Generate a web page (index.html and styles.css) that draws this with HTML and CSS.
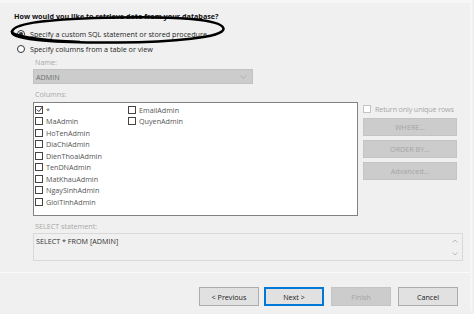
FILE: index.html
```html
<!DOCTYPE html>
<html lang="en">
<head>
  <meta charset="UTF-8" />
  <title>Choose a Command Type</title>
  <link rel="stylesheet" href="styles.css">
</head>
<body>
  <div class="dialog">
    <svg class="ink" width="474" height="60" viewBox="0 0 474 60">
      <path d="M12 32 C 13 22, 60 18.5, 118 17.5 C 175 16.5, 221 19, 223.5 28.5 C 225.5 37.5, 170 42, 118 42.5 C 60 43, 11 40, 12 32 Z" fill="none" stroke="#000" stroke-width="2.6"/>
      <path d="M11 31 C 14 36, 40 40, 80 41.5" fill="none" stroke="#000" stroke-width="1.6"/>
    </svg>

    <p class="question">How would you like to retrieve data from your database?</p>
    <div class="radio-row"><span class="radio checked"></span>Specify a custom SQL statement or stored procedure</div>
    <div class="radio-row"><span class="radio"></span>Specify columns from a table or view</div>

    <div class="indent">
      <div class="field-label">Name:</div>
      <div class="combo">
        <span>ADMIN</span>
        <svg width="7" height="4" viewBox="0 0 7 4"><path d="M0.5 0.5 L3.5 3.3 L6.5 0.5" fill="none" stroke="#a9a9a9" stroke-width="0.9"/></svg>
      </div>

      <div class="field-label cols-label">Columns:</div>
      <div class="columns-row">
        <div class="col-list">
          <div class="item"><span class="check"><svg width="7" height="7" viewBox="0 0 7 7"><path d="M0.8 3.6 L2.8 5.6 L6.4 1" fill="none" stroke="#333" stroke-width="1"/></svg></span>*</div>
          <div class="item"><span class="check"></span>MaAdmin</div>
          <div class="item"><span class="check"></span>HoTenAdmin</div>
          <div class="item"><span class="check"></span>DiaChiAdmin</div>
          <div class="item"><span class="check"></span>DienThoaiAdmin</div>
          <div class="item"><span class="check"></span>TenDNAdmin</div>
          <div class="item"><span class="check"></span>MatKhauAdmin</div>
          <div class="item"><span class="check"></span>NgaySinhAdmin</div>
          <div class="item"><span class="check"></span>GioiTinhAdmin</div>
          <div class="item"><span class="check"></span>EmailAdmin</div>
          <div class="item"><span class="check"></span>QuyenAdmin</div>
        </div>
        <div class="side">
          <div class="unique"><span class="check off"></span>Return only unique rows</div>
          <div class="btn off">WHERE...</div>
          <div class="btn off">ORDER BY...</div>
          <div class="btn off">Advanced...</div>
        </div>
      </div>

      <div class="field-label stmt-label">SELECT statement:</div>
      <div class="stmt">
        <span>SELECT * FROM [ADMIN]</span>
        <div class="scroll">
          <svg width="6" height="4" viewBox="0 0 6 4"><path d="M0.5 3.5 L3 1 L5.5 3.5" fill="none" stroke="#b5b5b5" stroke-width="0.9"/></svg>
          <svg width="6" height="4" viewBox="0 0 6 4"><path d="M0.5 0.5 L3 3 L5.5 0.5" fill="none" stroke="#b5b5b5" stroke-width="0.9"/></svg>
        </div>
      </div>
    </div>

    <div class="footer">
      <div class="btn prev">&lt; Previous</div>
      <div class="btn next">Next &gt;</div>
      <div class="btn off">Finish</div>
      <div class="btn">Cancel</div>
    </div>
  </div>
</body>
</html>
```

FILE: styles.css
```css
body {
  margin: 0;
  font-family: "Open Sans", "Noto Sans", sans-serif;
  font-size: 7.2px;
  color: #1e1e1e;
  background: #f0f0f0;
}

.dialog {
  position: relative;
  width: 472px;
  height: 311px;
  padding-top: 8px;
  box-sizing: border-box;
  border-top: 3px solid #f6f6f6;
  border-right: 2px solid #f6f6f6;
  overflow: hidden;
}

.ink {
  position: absolute;
  left: 0;
  top: -3px;
}

.question {
  margin: 0 0 5px 14px;
  line-height: 10px;
  font-weight: bold;
  color: #111;
}

.radio-row {
  display: flex;
  align-items: center;
  height: 15px;
  padding-left: 17px;
}

.radio {
  width: 8px;
  height: 8px;
  border: 1px solid #333;
  border-radius: 50%;
  box-sizing: border-box;
  margin-right: 5px;
  display: flex;
  align-items: center;
  justify-content: center;
  background: #fff;
}

.radio.checked::after {
  content: "";
  width: 4px;
  height: 4px;
  border-radius: 50%;
  background: #333;
}

.indent {
  padding-left: 33px;
}

.field-label {
  line-height: 10px;
  color: #a8a8a8;
  padding-left: 2px;
  margin-top: 1px;
}

.combo {
  margin-top: 2px;
  width: 220px;
  height: 15px;
  box-sizing: border-box;
  background: #cccccc;
  border: 1px solid #c2c2c2;
  display: flex;
  align-items: center;
  justify-content: space-between;
  padding: 0 5px 0 2px;
  color: #6f6f6f;
}

.cols-label {
  margin-top: 5px;
  margin-bottom: 3px;
}

.columns-row {
  display: flex;
  gap: 5px;
}

.col-list {
  width: 325px;
  height: 114px;
  box-sizing: border-box;
  border: 1px solid #828282;
  background: #fff;
  padding: 1px 0 0 1px;
  display: grid;
  grid-template-rows: repeat(9, 11.5px);
  grid-template-columns: 93px auto;
  grid-auto-flow: column;
  align-content: start;
}

.item {
  display: flex;
  align-items: center;
  color: #555;
}

.check {
  width: 8px;
  height: 8px;
  border: 1px solid #444;
  box-sizing: border-box;
  margin-right: 3px;
  display: flex;
  align-items: center;
  justify-content: center;
  background: #fff;
  flex-shrink: 0;
}

.check svg {
  margin: -1px;
}

.side {
  width: 94px;
}

.unique {
  display: flex;
  align-items: center;
  height: 12px;
  margin-top: 1px;
  color: #a8a8a8;
  white-space: nowrap;
  letter-spacing: -0.15px;
}

.check.off {
  border-color: #c4c4c4;
  margin-right: 4px;
}

.btn {
  height: 19px;
  box-sizing: border-box;
  background: #e1e1e1;
  border: 1px solid #adadad;
  display: flex;
  align-items: center;
  justify-content: center;
  color: #222;
}

.btn.off {
  background: #cccccc;
  border-color: #c4c4c4;
  color: #a5a5a5;
}

.side .btn {
  height: 18px;
  margin-top: 4px;
}

.side .unique + .btn {
  margin-top: 3px;
}

.stmt-label {
  margin-top: 5px;
}

.stmt {
  margin-top: 2px;
  width: 430px;
  height: 28px;
  box-sizing: border-box;
  border: 1px solid #d9d9d9;
  display: flex;
  justify-content: space-between;
  padding: 2px 4px 0 2px;
  color: #333;
}

.scroll {
  display: flex;
  flex-direction: column;
  justify-content: space-between;
  padding: 3px 0 4px;
}

.footer {
  margin-top: 11px;
  border-top: 1px solid #fafafa;
  padding: 14px 12px 0 0;
  display: flex;
  justify-content: flex-end;
  gap: 7px;
}

.footer .btn {
  width: 60px;
}

.footer .prev {
  margin-right: -2px;
}

.footer .next {
  border: 1px solid #0078d7;
  box-shadow: inset 0 0 0 1px #0078d7;
}
```
